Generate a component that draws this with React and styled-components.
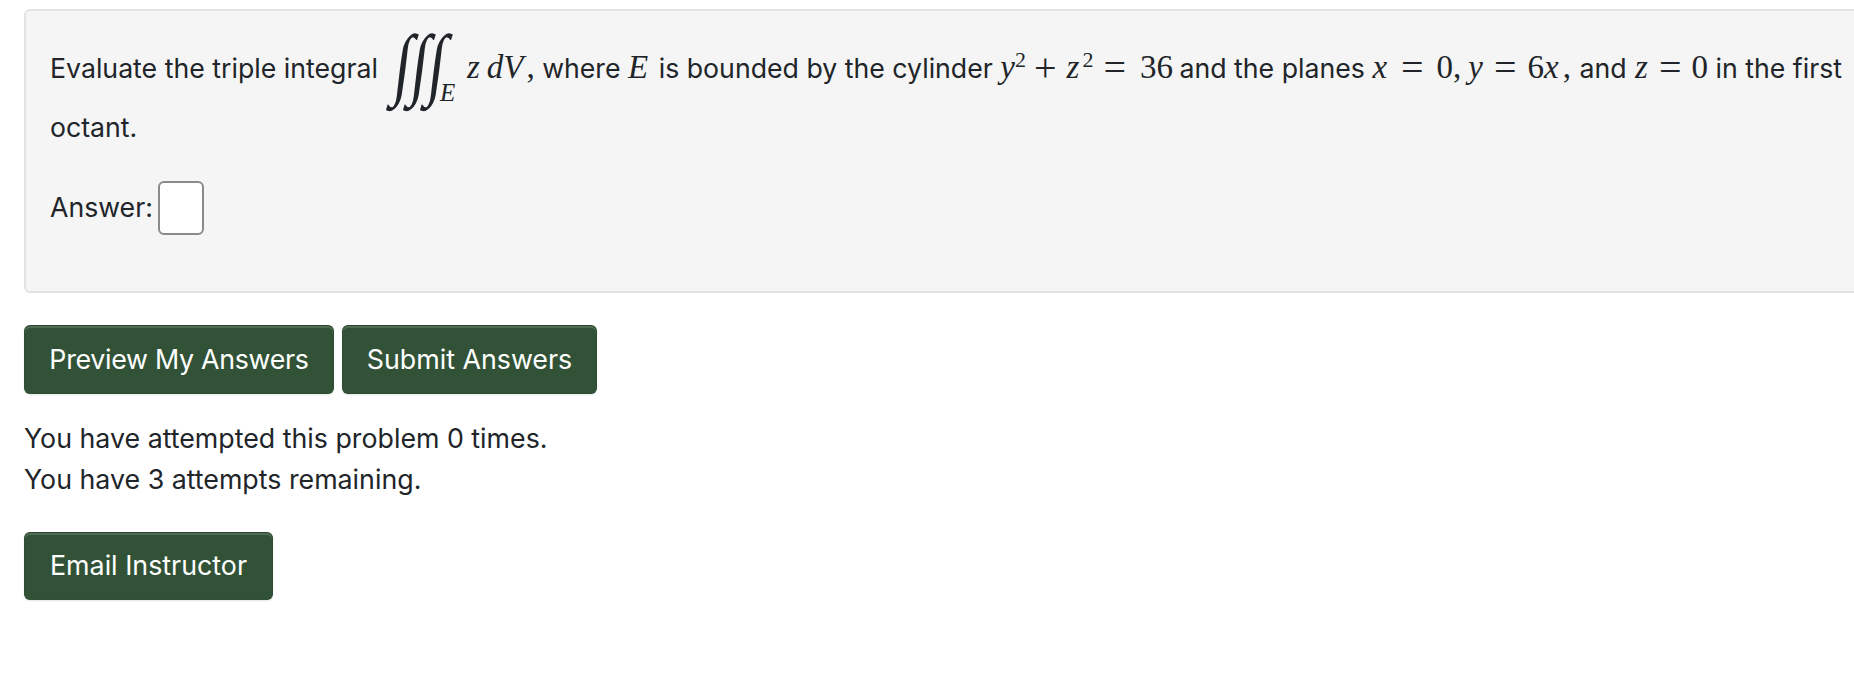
import React from 'react';
import styled, { createGlobalStyle } from 'styled-components';

const GlobalStyle = createGlobalStyle`
  html, body {
    margin: 0;
    padding: 0;
    background: #fff;
    overflow: hidden;
  }
  body {
    font-family: Inter, "Noto Sans", sans-serif;
    font-size: 26.7px;
    line-height: 41px;
    color: #212529;
  }
`;

const Page = styled.div`
  width: 1854px;
  height: 680px;
  padding: 9px 0 0 24px;
  box-sizing: border-box;
  overflow: hidden;
`;

const ProblemPanel = styled.div`
  width: 1900px;
  height: 284px;
  box-sizing: border-box;
  padding: 28px 0 0 24px;
  background: #f5f5f5;
  border: 2px solid #e3e3e3;
  border-radius: 6px;
`;

const Statement = styled.p`
  margin: 0;
  width: 1830px;
  line-height: 59px;
`;

const Nowrap = styled.span`
  white-space: nowrap;
`;

const Integrals = styled.span`
  display: inline-block;
  position: relative;
  height: 59px;
  width: 63px;
  margin: 0 14px 0 12px;
  vertical-align: top;
  font-family: "Liberation Serif", serif;
`;

const IntegralSign = styled.span`
  position: absolute;
  top: -16px;
  left: ${(p) => p.$left}px;
  font-size: 62px;
  line-height: 62px;
  transform: scaleY(1.28) skewX(-9deg);
  transform-origin: center top;
`;

const LowerLimit = styled.i`
  position: absolute;
  left: 50px;
  top: 42px;
  font-family: "Liberation Serif", serif;
  font-size: 25px;
  line-height: 24px;
`;

const MathVar = styled.i`
  font-family: "Liberation Serif", serif;
  font-size: 33px;
  line-height: 0;
  margin-left: ${(p) => p.$ml || 0}px;
  margin-right: ${(p) => p.$mr || 0}px;
`;

const MathNum = styled.span`
  font-family: "Liberation Serif", serif;
  font-size: 33px;
  line-height: 0;
  margin-left: ${(p) => p.$ml || 0}px;
  margin-right: ${(p) => p.$mr || 0}px;
`;

const MathOp = styled.span`
  font-family: "Liberation Serif", serif;
  font-size: 40px;
  line-height: 0;
  vertical-align: -3px;
  margin-left: ${(p) => p.$ml || 0}px;
  margin-right: ${(p) => p.$mr || 0}px;
`;

const Sup = styled.sup`
  font-family: "Liberation Serif", serif;
  font-size: 22px;
  line-height: 0;
  vertical-align: 11px;
  margin-left: ${(p) => p.$ml || 0}px;
`;

const AnswerRow = styled.div`
  display: flex;
  align-items: center;
  gap: 5px;
  margin-top: 23.5px;
`;

const AnswerInput = styled.input`
  width: 46px;
  height: 54px;
  box-sizing: border-box;
  padding: 0;
  background: #fff;
  border: 2px solid #8a8a8a;
  border-radius: 6px;
`;

const ButtonRow = styled.div`
  display: flex;
  gap: 8px;
  margin-top: 32px;
`;

const ActionButton = styled.button`
  width: ${(p) => p.$w}px;
  height: ${(p) => p.$h || 69}px;
  padding: 0 0 2px;
  font-family: Inter, "Noto Sans", sans-serif;
  font-size: 26.8px;
  letter-spacing: ${(p) => p.$ls || 0}px;
  color: #fff;
  background: #325237;
  border: 1px solid #2f4e34;
  border-top-color: #2a4530;
  border-radius: 6px;
  box-shadow: inset 0 2px 0 rgba(255, 255, 255, 0.15), 0 1px 2px rgba(0, 0, 0, 0.1);
`;

const Attempts = styled.div`
  margin-top: 24px;
  font-size: 26.78px;
`;

export default function App() {
  return (
    <>
      <GlobalStyle />
      <Page>
        <ProblemPanel>
          <Statement>
            <span>Evaluate the triple integral</span>
            <Integrals>
              <IntegralSign $left={10}>∫</IntegralSign>
              <IntegralSign $left={27}>∫</IntegralSign>
              <IntegralSign $left={44}>∫</IntegralSign>
              <LowerLimit>E</LowerLimit>
            </Integrals>
            <MathVar $mr={7}>z</MathVar>
            <MathVar>dV</MathVar>
            <MathNum $ml={3}>,</MathNum> <span>where</span> <MathVar $mr={3}>E</MathVar>{' '}
            <span>is bounded by the cylinder</span>{' '}
            <Nowrap>
              <MathVar>y</MathVar>
              <Sup>2</Sup>
              <MathOp $ml={8} $mr={10}>+</MathOp>
              <MathVar>z</MathVar>
              <Sup $ml={3}>2</Sup>
              <MathOp $ml={10} $mr={14}>=</MathOp>
              <MathNum $mr={-1}>36</MathNum>
            </Nowrap>{' '}
            <span>and the planes</span>{' '}
            <Nowrap>
              <MathVar>x</MathVar>
              <MathOp $ml={14} $mr={13}>=</MathOp>
              <MathNum>0,</MathNum>
              <MathVar $ml={7}>y</MathVar>
              <MathOp $ml={11} $mr={11}>=</MathOp>
              <MathNum>6</MathNum>
              <MathVar>x</MathVar>
              <MathNum $ml={4} $mr={1}>,</MathNum>
            </Nowrap>{' '}
            <span>and</span>{' '}
            <Nowrap>
              <MathVar $ml={1}>z</MathVar>
              <MathOp $ml={11} $mr={10}>=</MathOp>
              <MathNum>0</MathNum>
            </Nowrap>{' '}
            <span>in the first</span> <span>octant.</span>
          </Statement>
          <AnswerRow>
            Answer:
            <AnswerInput aria-label="Answer" />
          </AnswerRow>
        </ProblemPanel>
        <ButtonRow>
          <ActionButton $w={310} $ls={-0.3}>Preview My Answers</ActionButton>
          <ActionButton $w={255}>Submit Answers</ActionButton>
        </ButtonRow>
        <Attempts>
          You have attempted this problem 0 times.
          <br />
          You have 3 attempts remaining.
        </Attempts>
        <ButtonRow>
          <ActionButton $w={249} $h={68}>Email Instructor</ActionButton>
        </ButtonRow>
      </Page>
    </>
  );
}
